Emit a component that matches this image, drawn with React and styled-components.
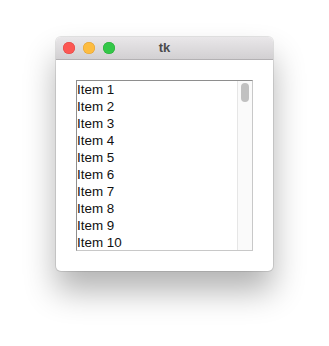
import React from "react";
import styled, { createGlobalStyle } from "styled-components";

const GlobalStyle = createGlobalStyle`
  html, body {
    margin: 0;
    padding: 0;
    background: #ffffff;
  }
  body {
    font-family: "Liberation Sans", Arial, sans-serif;
  }
`;

const Page = styled.div`
  width: 329px;
  height: 346px;
  padding: 37px 0 0 56px;
  box-sizing: border-box;
`;

const Window = styled.div`
  width: 217px;
  height: 234px;
  background: #ffffff;
  border-radius: 5px;
  overflow: hidden;
  box-shadow: 0 0 0 1px rgba(0, 0, 0, 0.1), 0 20px 32px rgba(0, 0, 0, 0.3);
  display: flex;
  flex-direction: column;
`;

const TitleBar = styled.div`
  height: 22px;
  flex: none;
  position: relative;
  display: flex;
  align-items: center;
  gap: 8px;
  padding-left: 7px;
  background: linear-gradient(#e9e7e9, #d2d0d2);
  border-bottom: 1px solid #b3b1b3;
`;

const Light = styled.span`
  width: 12px;
  height: 12px;
  border-radius: 50%;
  background: ${(p) => p.color};
  box-shadow: inset 0 0 0 0.5px ${(p) => p.edge};
`;

const Title = styled.div`
  position: absolute;
  left: 0;
  right: 0;
  top: 0;
  line-height: 22px;
  text-align: center;
  font-size: 13px;
  font-weight: bold;
  color: #4a4a4a;
  pointer-events: none;
`;

const Body = styled.div`
  flex: 1;
  padding: 20px 20px 0 20px;
`;

const ListBox = styled.div`
  width: 177px;
  height: 171px;
  box-sizing: border-box;
  border: 1px solid #c8c8c8;
  border-top-color: #8e8e8e;
  border-left-color: #8e8e8e;
  display: flex;
  overflow: hidden;
`;

const Items = styled.div`
  flex: 1;
`;

const Item = styled.div`
  height: 17px;
  line-height: 17px;
  font-size: 13.4px;
  color: #111111;
  white-space: nowrap;
`;

const Scrollbar = styled.div`
  width: 15px;
  flex: none;
  background: #fafafa;
  border-left: 1px solid #e6e6e6;
  box-sizing: border-box;
  padding: 2px 3px 0 3px;
`;

const Thumb = styled.div`
  width: 8px;
  height: 19px;
  border-radius: 4px;
  background: #c1c1c1;
`;

const items = Array.from({ length: 10 }, (_, i) => `Item ${i + 1}`);

export default function App() {
  return (
    <>
      <GlobalStyle />
      <Page>
        <Window>
          <TitleBar>
            <Light color="#fc5753" edge="#de4542" />
            <Light color="#fdbc40" edge="#de9f34" />
            <Light color="#33c748" edge="#27aa35" />
            <Title>tk</Title>
          </TitleBar>
          <Body>
            <ListBox>
              <Items>
                {items.map((t) => (
                  <Item key={t}>{t}</Item>
                ))}
              </Items>
              <Scrollbar>
                <Thumb />
              </Scrollbar>
            </ListBox>
          </Body>
        </Window>
      </Page>
    </>
  );
}
